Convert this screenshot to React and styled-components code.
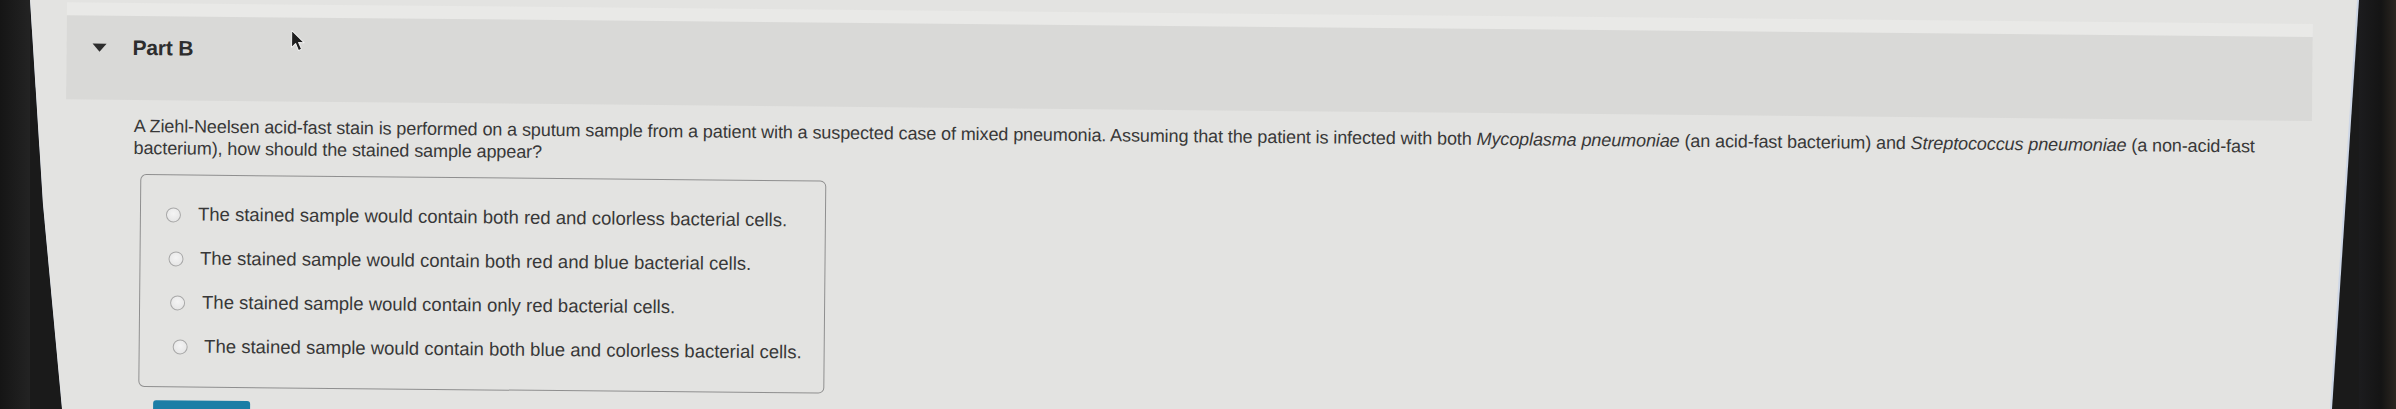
import styled, { createGlobalStyle } from "styled-components";

const GlobalStyle = createGlobalStyle`
  html, body {
    margin: 0;
    padding: 0;
    background: #1a1a1a;
  }
  body {
    font-family: "Liberation Sans", Arial, sans-serif;
  }
`;

const screenShape = "polygon(0 0, 100% 0, calc(100% - 27px) 100%, 32px 100%, 13px 50%)";

const Frame = styled.div`
  display: flex;
  width: 2396px;
  height: 409px;
  overflow: hidden;
  background: #1a1a1a;
`;

const LeftBezel = styled.div`
  width: 30px;
  flex: none;
  background: linear-gradient(90deg, #151515 0%, #232323 100%);
`;

const RightBezel = styled.div`
  width: 37px;
  flex: none;
  background: linear-gradient(90deg, #1c1c1e 0%, #141414 60%, #2b2620 100%);
`;

const ScreenEdge = styled.div`
  flex: 1;
  display: flex;
  background: #cdd6e6;
  clip-path: ${screenShape};
`;

const Screen = styled.div`
  flex: 1;
  margin-right: 2px;
  background: #e3e3e1;
  overflow: hidden;
  clip-path: ${screenShape};
`;

const Content = styled.div`
  padding: 15px 44px 0 37px;
  transform: rotate(0.55deg);
  transform-origin: 0 0;
`;

const HeaderBand = styled.div`
  position: relative;
  display: flex;
  align-items: center;
  gap: 25px;
  height: 64px;
  padding: 0 0 20px 25px;
  background: #d9d9d7;
  box-shadow: 0 -13px 0 #e9e9e7;
`;

const PartTitle = styled.span`
  font-size: 21px;
  font-weight: 700;
  color: #2d2d2d;
  letter-spacing: -0.2px;
`;

const Cursor = styled.svg`
  position: absolute;
  left: 224px;
  top: 12px;
`;

const Question = styled.p`
  margin: 15px 0 0 68px;
  width: 2160px;
  font-size: 18px;
  letter-spacing: -0.1px;
  line-height: 22px;
  color: #383838;

  em {
    font-style: italic;
  }
`;

const OptionsBox = styled.div`
  margin: 15px 0 0 75px;
  width: 686px;
  box-sizing: border-box;
  padding: 17px 0 18px 25px;
  border: 1.5px solid #8f8f8f;
  border-radius: 6px;
`;

const OptionRow = styled.label`
  display: flex;
  align-items: center;
  gap: 17px;
  height: 44px;
  padding-left: ${({ $shift }) => $shift}px;
  font-size: 18.5px;
  color: #383838;
  cursor: pointer;
`;

const Radio = styled.span`
  width: 13px;
  height: 13px;
  flex: none;
  border-radius: 50%;
  border: 1.5px solid #a9a9a9;
  background: radial-gradient(circle at 50% 40%, #f4f4f4 0%, #e2e2e2 100%);
`;

const SubmitButton = styled.div`
  margin: 13px 0 0 90px;
  width: 97px;
  height: 40px;
  border-radius: 3px;
  background: #1b7ea6;
`;

const options = [
  "The stained sample would contain both red and colorless bacterial cells.",
  "The stained sample would contain both red and blue bacterial cells.",
  "The stained sample would contain only red bacterial cells.",
  "The stained sample would contain both blue and colorless bacterial cells.",
];

const App = () => {
  return (
    <>
      <GlobalStyle />
      <Frame>
        <LeftBezel />
        <ScreenEdge>
          <Screen>
            <Content>
              <HeaderBand>
                <svg width="16" height="10" viewBox="0 0 16 10">
                  <path d="M1 1 L15 1 L8 9 Z" fill="#2d2d2d" />
                </svg>
                <PartTitle>Part B</PartTitle>
                <Cursor width="15" height="23" viewBox="0 0 15 23">
                  <path
                    d="M1 1 L1 18 L5 14 L8 21 L11 19.5 L8 13 L13.5 13 Z"
                    fill="#1e1e1e"
                    stroke="#f2f2f2"
                    strokeWidth="1"
                    strokeLinejoin="round"
                  />
                </Cursor>
              </HeaderBand>

              <Question>
                A Ziehl-Neelsen acid-fast stain is performed on a sputum sample
                from a patient with a suspected case of mixed pneumonia.
                Assuming that the patient is infected with both{" "}
                <em>Mycoplasma pneumoniae</em> (an acid-fast bacterium) and{" "}
                <em>Streptococcus pneumoniae</em> (a non-acid-fast bacterium),
                how should the stained sample appear?
              </Question>

              <OptionsBox>
                {options.map((text, i) => (
                  <OptionRow key={text} $shift={i * 2.5}>
                    <Radio />
                    {text}
                  </OptionRow>
                ))}
              </OptionsBox>

              <SubmitButton />
            </Content>
          </Screen>
        </ScreenEdge>
        <RightBezel />
      </Frame>
    </>
  );
};

export default App;
